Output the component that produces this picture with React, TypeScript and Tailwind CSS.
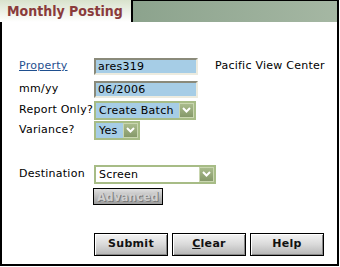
import React from 'react';

const font = { fontFamily: '"DejaVu Sans", Verdana, sans-serif' };

const Arrow: React.FC = () => (
  <span className="flex h-[15px] w-[15px] items-center justify-center border border-[#c9d6b0] bg-gradient-to-b from-[#a9bb8c] to-[#86996a]">
    <svg width="9" height="6" viewBox="0 0 9 6">
      <path d="M1 1 L4.5 4.5 L8 1" fill="none" stroke="#ffffff" strokeWidth="2" />
    </svg>
  </span>
);

const Select: React.FC<{ value: string; width: string; bg: string }> = ({ value, width, bg }) => (
  <div className={`flex h-[19px] items-center border-2 border-[#a7bc86] ${width} ${bg}`}>
    <span className="flex-1 whitespace-nowrap pl-[3px] text-[11px] leading-none tracking-[0.25px] text-black">{value}</span>
    <Arrow />
  </div>
);

const TextBox: React.FC<{ value: string }> = ({ value }) => (
  <div className="flex h-[17px] w-[104px] items-center border-2 border-t-[#8a8a7a] border-l-[#8a8a7a] border-r-[#ecebdf] border-b-[#ecebdf] bg-[#a6cde6] pl-[2px] text-[11px] leading-none tracking-[0.25px] text-black">
    {value}
  </div>
);

const Btn: React.FC<{ children: React.ReactNode }> = ({ children }) => (
  <button className="h-[23px] w-[74px] shrink-0 border border-black bg-gradient-to-b from-[#f4f4f4] via-[#d9d9d9] to-[#b5b5b5] text-[11px] font-bold tracking-[0.3px] text-[#111] shadow-[inset_1px_1px_0_#ffffff,inset_-1px_-1px_0_#888888]">
    {children}
  </button>
);

export default function App() {
  return (
    <div className="flex h-[266px] w-[339px] flex-col bg-white" style={font}>
      {/* header */}
      <div className="flex h-[22px]">
        <div className="flex w-[133px] items-center border-r-2 border-black bg-gradient-to-b from-[#d8e2cc] to-white pl-[7px]">
          <span className="whitespace-nowrap font-['DejaVu_Sans_Condensed',sans-serif] text-[14px] font-bold leading-none text-[#8a3b3b]">
            Monthly Posting
          </span>
        </div>
        <div className="flex-1 border-t border-r-2 border-black bg-gradient-to-r from-[#8ca38d] to-[#a5b7a3]" />
      </div>

      {/* body */}
      <div className="flex flex-1 flex-col border-b-2 border-l-2 border-r-2 border-black pl-[17px] pt-[33px] text-[11px] tracking-[0.25px] text-black">
        <div className="flex h-[23px] items-center">
          <a className="w-[75px] text-[#1f4f8f] underline">Property</a>
          <TextBox value="ares319" />
          <span className="ml-[17px]">Pacific View Center</span>
        </div>
        <div className="flex h-[22px] items-center">
          <span className="w-[75px]">mm/yy</span>
          <TextBox value="06/2006" />
        </div>
        <div className="flex h-[20px] items-center">
          <span className="w-[75px]">Report Only?</span>
          <Select value="Create Batch" width="w-[102px]" bg="bg-[#a6cde6]" />
        </div>
        <div className="flex h-[20px] items-center">
          <span className="w-[75px]">Variance?</span>
          <Select value="Yes" width="w-[46px]" bg="bg-[#a6cde6]" />
        </div>
        <div className="mt-[24px] flex h-[20px] items-center">
          <span className="w-[75px]">Destination</span>
          <Select value="Screen" width="w-[122px]" bg="bg-white" />
        </div>
        <div className="mt-[4px] pl-[74px]">
          <button className="h-[17px] w-[70px] border border-black bg-gradient-to-b from-[#e0e0e0] to-[#9c9c9c] font-['DejaVu_Sans_Condensed',sans-serif] text-[12px] font-bold leading-none text-[#cfcfcf] [text-shadow:1px_1px_0_#7a7a7a]">
            Advanced
          </button>
        </div>
        <div className="mt-[27px] flex gap-[4px] pl-[75px]">
          <Btn>Submit</Btn>
          <Btn>
            <span className="underline">C</span>lear
          </Btn>
          <Btn>Help</Btn>
        </div>
      </div>
    </div>
  );
}
